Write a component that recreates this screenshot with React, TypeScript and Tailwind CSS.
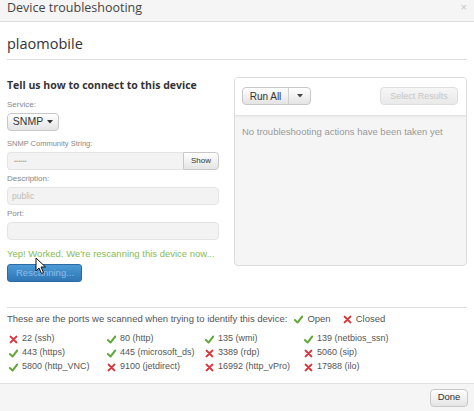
import React from 'react';

type Port = { label: string; open: boolean };

const ports: Port[] = [
  { label: '22 (ssh)', open: false },
  { label: '80 (http)', open: true },
  { label: '135 (wmi)', open: true },
  { label: '139 (netbios_ssn)', open: true },
  { label: '443 (https)', open: true },
  { label: '445 (microsoft_ds)', open: true },
  { label: '3389 (rdp)', open: false },
  { label: '5060 (sip)', open: false },
  { label: '5800 (http_VNC)', open: true },
  { label: '9100 (jetdirect)', open: false },
  { label: '16992 (http_vPro)', open: false },
  { label: '17988 (ilo)', open: false },
];

function Check() {
  return (
    <svg width="9" height="9" viewBox="0 0 10 10" className="shrink-0">
      <path d="M1 5.6 L3.9 8.4 L9.2 1.6" fill="none" stroke="#62a83a" strokeWidth="2.2" strokeLinecap="round" strokeLinejoin="round" />
    </svg>
  );
}

function Cross() {
  return (
    <svg width="9" height="9" viewBox="0 0 10 10" className="shrink-0">
      <path d="M1.8 1.8 L8.2 8.2 M8.2 1.8 L1.8 8.2" fill="none" stroke="#d8363a" strokeWidth="2.3" strokeLinecap="round" />
    </svg>
  );
}

const btn =
  'border border-[#c8c8c8] rounded-[4px] bg-gradient-to-b from-white to-[#e4e4e4] text-[#333] shadow-[inset_0_1px_0_rgba(255,255,255,0.6)]';

export default function App() {
  return (
    <div className="relative w-[474px] h-[411px] overflow-hidden bg-white font-['Liberation_Sans',Arial,sans-serif]">
      <div className="h-[22px] bg-[#f5f5f5] border-b border-[#dedede] flex items-start justify-between pl-[7px] pr-[7px]">
        <div className="font-['Open_Sans',sans-serif] text-[12.5px] leading-[15px] text-[#444]">Device troubleshooting</div>
        <div className="pt-[1px] text-[11px] leading-[12px] text-[#c4c4c4]">×</div>
      </div>

      <div className="px-[7px]">
        <div className="h-[38px] border-b border-[#ddd] flex items-end pb-[6px]">
          <div className="font-['Open_Sans',sans-serif] text-[14.5px] leading-[18px] text-[#333]">plaomobile</div>
        </div>

        <div className="flex gap-[15px] mt-[17px] h-[230px]">
          <div className="w-[212px] flex flex-col">
            <div className="font-['Open_Sans',sans-serif] font-bold text-[10.5px] leading-[16px] text-[#333] whitespace-nowrap">
              Tell us how to connect to this device
            </div>
            <div className="mt-[6px] text-[8px] leading-[12px] text-[#888]">Service:</div>
            <div className={`${btn} mt-[2px] w-[52px] h-[18px] flex items-center justify-center gap-[4px] text-[10.5px]`}>
              SNMP
              <svg width="6" height="4" viewBox="0 0 6 4"><path d="M0 0 H6 L3 3.5 Z" fill="#333" /></svg>
            </div>
            <div className="mt-[7px] text-[7.5px] leading-[12px] text-[#888]">SNMP Community String:</div>
            <div className="mt-[2px] h-[18px] flex">
              <div className="flex-1 border border-[#e4e4e4] border-r-0 rounded-l-[4px] bg-[#f3f3f3] text-[6px] leading-[16px] text-[#aaa] pl-[6px]">
                ••••••
              </div>
              <div className={`${btn} !rounded-l-none w-[36px] flex items-center justify-center text-[8px]`}>Show</div>
            </div>
            <div className="mt-[3px] text-[8px] leading-[12px] text-[#888]">Description:</div>
            <div className="mt-[2px] h-[18px] border border-[#e4e4e4] rounded-[4px] bg-[#f3f3f3] text-[8.5px] leading-[16px] text-[#bbb] pl-[4px]">
              public
            </div>
            <div className="mt-[3px] text-[8px] leading-[12px] text-[#888]">Port:</div>
            <div className="mt-[2px] h-[18px] border border-[#e4e4e4] rounded-[4px] bg-[#f3f3f3]" />
            <div className="mt-[7px] text-[9.5px] leading-[14px] text-[#86bb58] whitespace-nowrap">
              Yep! Worked. We're rescanning this device now...
            </div>
            <div className="mt-[3px] w-[75px] h-[18px] rounded-[3px] border border-[#2b6aa3] bg-gradient-to-b from-[#4b9ad6] to-[#2f76b4] text-[9.5px] leading-[16px] text-[#8fbde6] pl-[8px] whitespace-nowrap overflow-hidden">
              Rescanning...
            </div>
          </div>

          <div className="w-[233px] h-[189px] border border-[#dcdcdc] rounded-[4px] bg-[#f5f5f5] flex flex-col overflow-hidden">
            <div className="h-[38px] bg-white border-b border-[#e2e2e2] shadow-[0_1px_2px_rgba(0,0,0,0.06)] flex items-start justify-between pt-[9px] pl-[7px] pr-[8px]">
              <div className={`${btn} h-[18px] flex`}>
                <div className="w-[46px] flex items-center justify-center text-[10px] border-r border-[#d0d0d0]">Run All</div>
                <div className="w-[21px] flex items-center justify-center">
                  <svg width="6" height="4" viewBox="0 0 6 4"><path d="M0 0 H6 L3 3.5 Z" fill="#444" /></svg>
                </div>
              </div>
              <div className="w-[78px] h-[18px] rounded-[4px] border border-[#dedede] bg-gradient-to-b from-[#f6f6f6] to-[#e9e9e9] text-[9px] leading-[16px] text-center text-[#c6c6c6]">
                Select Results
              </div>
            </div>
            <div className="pt-[9px] pl-[7px] text-[9.5px] leading-[14px] text-[#999] whitespace-nowrap">
              No troubleshooting actions have been taken yet
            </div>
          </div>
        </div>

        <div className="border-t border-[#ddd]">
          <div className="mt-[4px] flex items-center text-[9.5px] leading-[14px] text-[#555] whitespace-nowrap">
            <span>These are the ports we scanned when trying to identify this device:</span>
            <span className="ml-[7px] flex items-center gap-[4px]"><Check />Open</span>
            <span className="ml-[12px] flex items-center gap-[4px]"><Cross />Closed</span>
          </div>
          <div className="mt-[6px] grid grid-cols-[98px_98px_99px_1fr]">
            {ports.map((p) => (
              <div key={p.label} className="h-[14px] flex items-center gap-[4px] pl-[2px] text-[9px] text-[#555] whitespace-nowrap">
                {p.open ? <Check /> : <Cross />}
                <span>{p.label}</span>
              </div>
            ))}
          </div>
        </div>
      </div>

      <div className="absolute left-0 right-0 bottom-0 h-[28px] bg-[#f5f5f5] border-t border-[#e2e2e2] flex items-center justify-end pr-[6px]">
        <div className={`${btn} w-[38px] h-[18px] flex items-center justify-center text-[9.5px]`}>Done</div>
      </div>

      <svg className="absolute left-[35px] top-[257px]" width="12" height="18" viewBox="0 0 12 18">
        <path d="M1 1 L1 14 L4 11 L6.5 16.5 L8.5 15.5 L6 10 L10.5 10 Z" fill="#fff" stroke="#111" strokeWidth="1" strokeLinejoin="round" />
      </svg>
    </div>
  );
}
